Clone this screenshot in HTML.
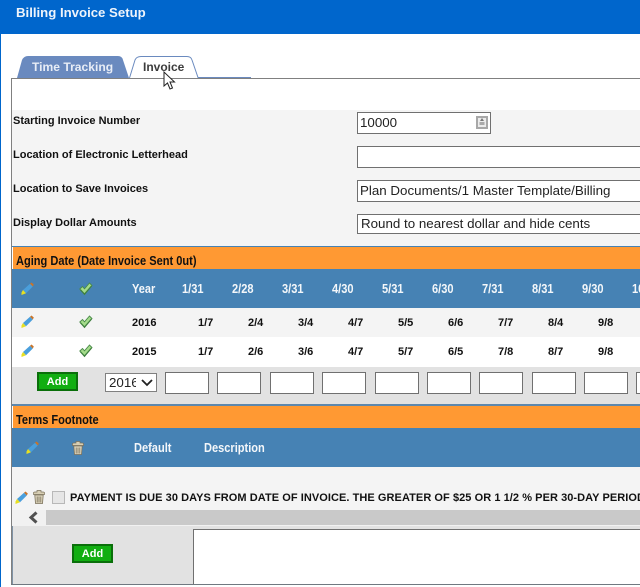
<!DOCTYPE html>
<html>
<head>
<meta charset="utf-8">
<style>
html,body{margin:0;padding:0;background:#fff}
body{width:640px;height:587px;position:relative;overflow:hidden;font-family:"Liberation Sans",sans-serif;color:#000}
.b{position:absolute}
.t{position:absolute;white-space:nowrap;line-height:14px}
.l{font-size:11px;font-weight:bold;color:#111}
.h{font-size:13px;font-weight:bold;color:#f4f7fa;transform:scaleX(.85);transform-origin:0 0}
.c{font-size:11px;font-weight:bold;color:#111}
.o{font-size:13px;font-weight:bold;color:#111;transform:scaleX(.85);transform-origin:0 0}
.i{position:absolute;box-sizing:border-box;border:1px solid #707070;background:#fff}
.v{font-size:13.35px;color:#222;position:absolute;white-space:nowrap;line-height:16px}
.add{position:absolute;box-sizing:border-box;width:41px;height:19px;background:#11ae11;border:2px solid #0a6f0a;color:#fff;font-size:11px;font-weight:bold;text-align:center;line-height:16px}
svg{position:absolute;overflow:visible}
</style>
</head>
<body>
<div class="b" style="left:0;top:0;width:640px;height:34px;background:#0066cc"></div>
<div class="b" style="left:0;top:34px;width:1px;height:553px;background:#0066cc"></div>
<div class="t" style="left:16px;top:5px;font-size:13.2px;font-weight:bold;color:#eef4fb;line-height:16px">Billing Invoice Setup</div>

<!-- tabs -->
<svg style="left:0;top:50px" width="260" height="30">
<path d="M17 28 L22 10 Q24 6 28 6 L118 6 Q122 6 123 10 L129 28Z" fill="#6a8abf"/>
<path d="M129.500 28 L135 10 Q136.500 6.500 141 6.500 L187 6.500 Q191 6.500 192 10 L198 27.500 L251 27.500" fill="#fff" stroke="#6a8abf" stroke-width="1"/>
</svg>
<div class="t" style="left:32px;top:60px;font-size:12.1px;font-weight:bold;color:#e8edf6">Time Tracking</div>
<div class="t" style="left:143px;top:60px;font-size:12px;font-weight:bold;color:#3c3c3c">Invoice</div>

<!-- panel -->
<div class="b" style="left:11px;top:78px;width:629px;height:1px;background:#808080"></div>
<div class="b" style="left:11px;top:78px;width:1px;height:507px;background:#808080"></div>

<div class="b" style="left:12px;top:110px;width:628px;height:136px;background:#f4f4f4"></div>
<div class="t l" style="left:13px;top:114px">Starting Invoice Number</div>
<div class="t l" style="left:13px;top:148px">Location of Electronic Letterhead</div>
<div class="t l" style="left:13px;top:182px">Location to Save Invoices</div>
<div class="t l" style="left:13px;top:216px">Display Dollar Amounts</div>

<div class="i" style="left:357px;top:112px;width:134px;height:22px"></div>
<div class="v" style="left:360px;top:115px">10000</div>
<div class="b" style="left:476px;top:116px;width:12px;height:13px;box-sizing:border-box;border:2px solid #a8a8a8;background:#ececec"></div>
<svg style="left:479px;top:118px" width="6" height="8"><path d="M3 0 L5 3 H1Z" fill="#777"/><rect x="0.500" y="4" width="5" height="3" fill="#aaa"/></svg>
<div class="i" style="left:357px;top:146px;width:290px;height:22px"></div>
<div class="i" style="left:357px;top:180px;width:290px;height:22px"></div>
<div class="v" style="left:360px;top:183px">Plan Documents/1 Master Template/Billing</div>
<div class="i" style="left:357px;top:214px;width:290px;height:20px"></div>
<div class="v" style="left:361px;top:216px">Round to nearest dollar and hide cents</div>

<!-- aging -->
<div class="b" style="left:12px;top:246px;width:628px;height:1px;background:#4682b4"></div>
<div class="b" style="left:13px;top:247px;width:627px;height:22px;background:#ff9933"></div>
<div class="t o" style="left:16px;top:254px">Aging Date (Date Invoice Sent 0ut)</div>
<div class="b" style="left:12px;top:269px;width:628px;height:39px;background:#4682b4"></div>
<div class="b" style="left:12px;top:308px;width:628px;height:29px;background:#f4f4f4"></div>
<div class="b" style="left:12px;top:337px;width:628px;height:30px;background:#fff"></div>
<div class="b" style="left:12px;top:367px;width:628px;height:37px;background:#e2e2e2"></div>

<svg width="0" height="0"><defs>
<g id="pen"><path d="M3 8 L10 1.800 L12.800 4.500 L6 11.300Z" fill="#4a9fdc"/><path d="M10 1.800 L11.500 0.500 L13.800 2.500 L12.800 4.500Z" fill="#c8742a"/><path d="M3 8 L6 11.300 L1.500 13 L1.500 10.500Z" fill="#e8e020"/></g>
<g id="chk"><path d="M0.800 7 L3.500 4.500 L5.500 6.800 L10.500 1 L13 3.500 L5.500 12.500Z" fill="#a4dc8a" stroke="#4a8a4a" stroke-width=".9"/><path d="M1.500 7.800 L5.500 12 L12.500 4" fill="none" stroke="#3f7f3f" stroke-width="1.200"/></g>
<g id="trash"><path d="M0.500 4.500 V3 Q0.500 2 2 2 H4 V0.500 H8 V2 H10 Q11.500 2 11.500 3 V4.500Z" fill="#d8cfb4" stroke="#7a705a" stroke-width=".7"/><path d="M1.800 5 H10.200 L9.500 13.500 H2.500Z" fill="#dfd7be" stroke="#7a705a" stroke-width=".8"/><path d="M4.200 6.500V12.500M6 6.500V12.500M7.800 6.500V12.500" stroke="#7a705a" stroke-width=".8"/></g>
</defs></svg>
<svg style="left:20px;top:282px" width="14" height="14"><use href="#pen"/></svg>
<svg style="left:79px;top:282px" width="14" height="14"><use href="#chk"/></svg>
<svg style="left:20px;top:315px" width="14" height="14"><use href="#pen"/></svg>
<svg style="left:79px;top:315px" width="14" height="14"><use href="#chk"/></svg>
<svg style="left:20px;top:344px" width="14" height="14"><use href="#pen"/></svg>
<svg style="left:79px;top:344px" width="14" height="14"><use href="#chk"/></svg>

<div class="t h" style="left:132px;top:282px">Year</div>
<div class="t h" style="left:182px;top:282px">1/31</div>
<div class="t h" style="left:232px;top:282px">2/28</div>
<div class="t h" style="left:282px;top:282px">3/31</div>
<div class="t h" style="left:332px;top:282px">4/30</div>
<div class="t h" style="left:382px;top:282px">5/31</div>
<div class="t h" style="left:432px;top:282px">6/30</div>
<div class="t h" style="left:482px;top:282px">7/31</div>
<div class="t h" style="left:532px;top:282px">8/31</div>
<div class="t h" style="left:582px;top:282px">9/30</div>
<div class="t h" style="left:632px;top:282px">10/31</div>

<div class="t c" style="left:132px;top:316px">2016</div>
<div class="t c" style="left:198px;top:316px">1/7</div>
<div class="t c" style="left:248px;top:316px">2/4</div>
<div class="t c" style="left:298px;top:316px">3/4</div>
<div class="t c" style="left:348px;top:316px">4/7</div>
<div class="t c" style="left:398px;top:316px">5/5</div>
<div class="t c" style="left:448px;top:316px">6/6</div>
<div class="t c" style="left:498px;top:316px">7/7</div>
<div class="t c" style="left:548px;top:316px">8/4</div>
<div class="t c" style="left:598px;top:316px">9/8</div>

<div class="t c" style="left:132px;top:345px">2015</div>
<div class="t c" style="left:198px;top:345px">1/7</div>
<div class="t c" style="left:248px;top:345px">2/6</div>
<div class="t c" style="left:298px;top:345px">3/6</div>
<div class="t c" style="left:348px;top:345px">4/7</div>
<div class="t c" style="left:398px;top:345px">5/7</div>
<div class="t c" style="left:448px;top:345px">6/5</div>
<div class="t c" style="left:498px;top:345px">7/8</div>
<div class="t c" style="left:548px;top:345px">8/7</div>
<div class="t c" style="left:598px;top:345px">9/8</div>

<div class="add" style="left:37px;top:372px">Add</div>
<div class="i" style="left:105px;top:373px;width:52px;height:19px;border-color:#808080"></div>
<div class="v" style="left:109px;top:375px;width:27px;overflow:hidden">2016</div>
<svg style="left:141px;top:379px" width="12" height="8"><path d="M1 1 L6 6 L11 1" fill="none" stroke="#222" stroke-width="1.8"/></svg>
<div class="i" style="left:165px;top:372px;width:44px;height:22px"></div>
<div class="i" style="left:217px;top:372px;width:44px;height:22px"></div>
<div class="i" style="left:270px;top:372px;width:44px;height:22px"></div>
<div class="i" style="left:322px;top:372px;width:44px;height:22px"></div>
<div class="i" style="left:375px;top:372px;width:44px;height:22px"></div>
<div class="i" style="left:427px;top:372px;width:44px;height:22px"></div>
<div class="i" style="left:479px;top:372px;width:44px;height:22px"></div>
<div class="i" style="left:532px;top:372px;width:44px;height:22px"></div>
<div class="i" style="left:584px;top:372px;width:44px;height:22px"></div>
<div class="i" style="left:636px;top:372px;width:44px;height:22px"></div>

<!-- terms -->
<div class="b" style="left:12px;top:404px;width:628px;height:2px;background:#5e88ad"></div>
<div class="b" style="left:13px;top:406px;width:627px;height:22px;background:#ff9933"></div>
<div class="t o" style="left:16px;top:413px">Terms Footnote</div>
<div class="b" style="left:12px;top:428px;width:628px;height:39px;background:#4682b4"></div>
<svg style="left:25px;top:441px" width="14" height="14"><use href="#pen"/></svg>
<svg style="left:71.500px;top:441px" width="12" height="15"><use href="#trash"/></svg>
<div class="t h" style="left:134px;top:441px">Default</div>
<div class="t h" style="left:204px;top:441px">Description</div>
<div class="b" style="left:12px;top:467px;width:628px;height:43px;background:#f4f4f4"></div>
<svg style="left:14px;top:491px" width="14" height="14"><use href="#pen"/></svg>
<svg style="left:33px;top:490px" width="12" height="15"><use href="#trash"/></svg>
<div class="b" style="left:52px;top:491px;width:13px;height:13px;box-sizing:border-box;border:1px solid #b8b8b8;background:#e6e6e6"></div>
<div class="t" style="left:70px;top:491px;font-size:11px;font-weight:bold;color:#111;letter-spacing:.06px">PAYMENT IS DUE 30 DAYS FROM DATE OF INVOICE. THE GREATER OF $25 OR 1 1/2 % PER 30-DAY PERIOD</div>

<div class="b" style="left:12px;top:510px;width:628px;height:16px;background:#f1f1f1"></div>
<div class="b" style="left:46px;top:510px;width:594px;height:15px;background:#c9c9c9"></div>
<svg style="left:28px;top:511px" width="10" height="13"><path d="M8.500 1.500 L3 6.500 L8.500 11.500" fill="none" stroke="#505050" stroke-width="3"/></svg>
<div class="b" style="left:12px;top:526px;width:628px;height:58px;background:#e2e2e2"></div>
<div class="b" style="left:12px;top:526px;width:1px;height:58px;background:#7f93a6"></div>
<div class="add" style="left:72px;top:544px">Add</div>
<div class="i" style="left:193px;top:529px;width:460px;height:55px;border-bottom:0"></div>
<div class="b" style="left:11px;top:584px;width:629px;height:1px;background:#707880"></div>

<!-- cursor -->
<svg style="left:163px;top:71px" width="14" height="20"><path d="M1 1 L1 15 L4.500 12 L7 18 L9.500 17 L7 11 L11.500 11Z" fill="#fff" stroke="#222" stroke-width="1"/></svg>
</body>
</html>
